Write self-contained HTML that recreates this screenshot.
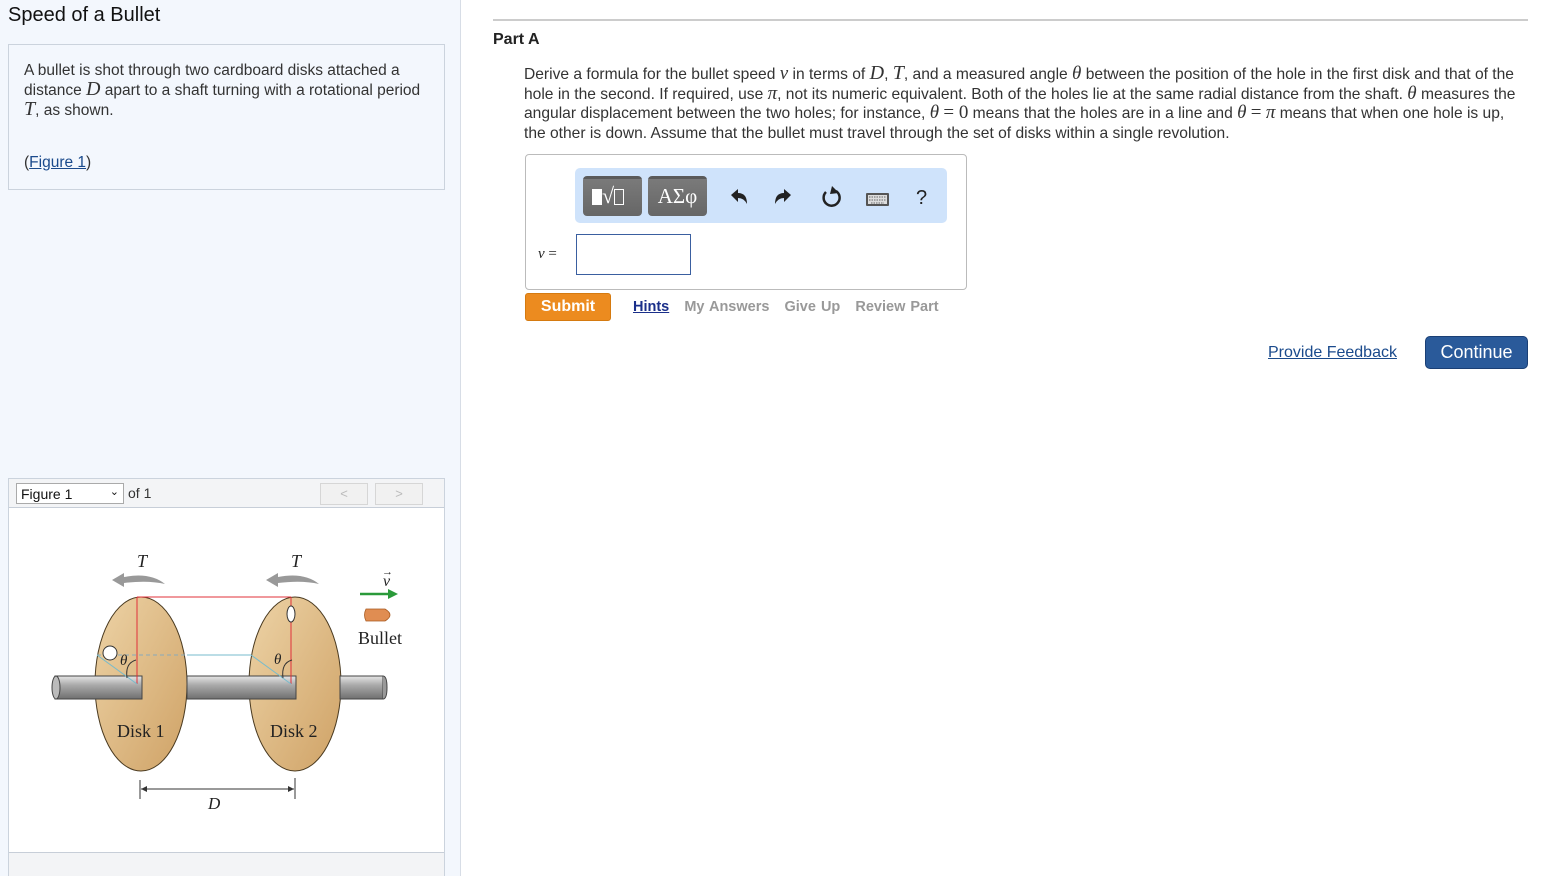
<!DOCTYPE html>
<html><head><meta charset="utf-8"><style>
*{margin:0;padding:0;box-sizing:border-box}
body{width:1544px;height:876px;overflow:hidden;background:#fff;font-family:"Liberation Sans",Arial,sans-serif;color:#333;position:relative}
.a{position:absolute}
.m{font-family:"Liberation Serif",serif;font-style:italic;font-size:19px;line-height:0}
.n{font-family:"Liberation Serif",serif;font-size:19px;line-height:0}
a{color:#1a4a8c}
</style></head><body>
<div class="a" style="left:0;top:0;width:461px;height:876px;background:#f3f7fd;border-right:1px solid #d7dde6"></div>
<div class="a" style="left:8px;top:4px;font-size:20px;color:#111">Speed of a Bullet</div>
<div class="a" style="left:8px;top:44px;width:437px;height:146px;border:1px solid #cbd3dd;background:#f3f7fd"></div>
<div class="a" style="left:24px;top:61px;width:405px;font-size:15.5px;line-height:20px;color:#333">A bullet is shot through two cardboard disks attached a distance <span class="m" style="font-size:20px">D</span> apart to a shaft turning with a rotational period <span class="m" style="font-size:20px">T</span>, as shown.</div>
<div class="a" style="left:24px;top:154px;font-size:15.5px">(<a href="#" style="color:#1a4a8c">Figure 1</a>)</div>

<div class="a" style="left:8px;top:478px;width:437px;height:398px;border:1px solid #cbd3dd;background:#fff"></div>
<div class="a" style="left:9px;top:479px;width:435px;height:29px;background:#f3f4f6;border-bottom:1px solid #c7ced8"></div>
<div class="a" style="left:16px;top:483px;width:108px;height:21px;border:1px solid #aaa;background:#fff;font-size:14px;padding:2px 4px;color:#111">Figure 1<span style="position:absolute;right:4px;top:1px;font-size:11px">&#8964;</span></div>
<div class="a" style="left:128px;top:485px;font-size:14px;color:#333">of 1</div>
<div class="a" style="left:320px;top:483px;width:48px;height:22px;border:1px solid #d6d6d6;background:#f1f1f1;color:#bbb;text-align:center;font-size:13px;line-height:20px">&lt;</div>
<div class="a" style="left:375px;top:483px;width:48px;height:22px;border:1px solid #d6d6d6;background:#f1f1f1;color:#bbb;text-align:center;font-size:13px;line-height:20px">&gt;</div>
<div class="a" style="left:9px;top:852px;width:435px;height:24px;background:#f3f4f6;border-top:1px solid #c7ced8"></div>

<svg class="a" style="left:0;top:0" width="461" height="876">
<defs>
<linearGradient id="d" x1="0" x2="1" y1="0" y2="1"><stop offset="0" stop-color="#edd3a6"/><stop offset="1" stop-color="#cfa266"/></linearGradient>
<linearGradient id="s" x1="0" x2="0" y1="0" y2="1"><stop offset="0" stop-color="#e6e6e6"/><stop offset=".4" stop-color="#a9a9a9"/><stop offset="1" stop-color="#707070"/></linearGradient>
</defs>
<ellipse cx="141" cy="684" rx="46" ry="87" fill="url(#d)" stroke="#4a3a20"/>
<rect x="55" y="676" width="87" height="23" fill="url(#s)" stroke="#444"/>
<ellipse cx="56" cy="687.5" rx="4" ry="11.5" fill="#bbb" stroke="#444"/>
<ellipse cx="295" cy="684" rx="46" ry="87" fill="url(#d)" stroke="#4a3a20"/>
<rect x="187" y="676" width="109" height="23" fill="url(#s)" stroke="#444"/>
<rect x="340" y="676" width="43" height="23" fill="url(#s)" stroke="#444"/>
<path d="M383 676 q4 0 4 11.5 q0 11.5 -4 11.5" fill="#999" stroke="#444"/>
<line x1="137" y1="597" x2="291" y2="597" stroke="#e0303a"/>
<line x1="137" y1="597" x2="137" y2="684" stroke="#e0303a"/>
<line x1="291" y1="597" x2="291" y2="684" stroke="#e0303a"/>
<line x1="97" y1="655" x2="185" y2="655" stroke="#8ab" stroke-dasharray="4 3"/>
<line x1="187" y1="655" x2="251" y2="655" stroke="#7bc"/>
<line x1="97" y1="655" x2="137" y2="684" stroke="#7bc"/>
<line x1="251" y1="655" x2="291" y2="684" stroke="#7bc"/>
<ellipse cx="110" cy="653" rx="7" ry="7" fill="#fff" stroke="#333"/>
<ellipse cx="291" cy="614" rx="4" ry="8" fill="#fff" stroke="#333"/>
<path d="M127 678 Q125 663 136 660" fill="none" stroke="#333"/>
<path d="M283 678 Q281 663 292 660" fill="none" stroke="#333"/>
<text x="120" y="665" font-family="Liberation Serif" font-style="italic" font-size="15" fill="#222">θ</text>
<text x="274" y="664" font-family="Liberation Serif" font-style="italic" font-size="15" fill="#222">θ</text>
<path d="M112 580 L124 573 L124 577 Q150 572 165 584 Q148 580 124 583 L124 587Z" fill="#999"/>
<path d="M266 580 L278 573 L278 577 Q304 572 319 584 Q302 580 278 583 L278 587Z" fill="#999"/>
<text x="137" y="567" font-family="Liberation Serif" font-style="italic" font-size="18" fill="#222">T</text>
<text x="291" y="567" font-family="Liberation Serif" font-style="italic" font-size="18" fill="#222">T</text>
<text x="383" y="586" font-family="Liberation Serif" font-style="italic" font-size="16" fill="#222">v</text>
<text x="382" y="575" font-size="11" fill="#222">→</text>
<line x1="360" y1="594" x2="390" y2="594" stroke="#2a9a3a" stroke-width="2.5"/>
<path d="M388 589 L398 594 L388 599Z" fill="#2a9a3a"/>
<path d="M366 609 L385 609 Q395 615 385 621 L366 621 Q363 615 366 609Z" fill="#e08d52" stroke="#a85a20" stroke-width=".8"/>
<text x="358" y="644" font-family="Liberation Serif" font-size="18" fill="#222">Bullet</text>
<text x="117" y="737" font-family="Liberation Serif" font-size="18" fill="#222">Disk 1</text>
<text x="270" y="737" font-family="Liberation Serif" font-size="18" fill="#222">Disk 2</text>
<line x1="140" y1="780" x2="140" y2="799" stroke="#333"/>
<line x1="295" y1="778" x2="295" y2="799" stroke="#333"/>
<line x1="141" y1="789" x2="294" y2="789" stroke="#333"/>
<path d="M141 789 l6 -3 v6z M294 789 l-6 -3 v6z" fill="#333"/>
<text x="208" y="809" font-family="Liberation Serif" font-style="italic" font-size="17" fill="#222">D</text>
</svg>

<div class="a" style="left:493px;top:19px;width:1035px;height:2px;background:#ccc"></div>
<div class="a" style="left:493px;top:31px;font-size:16px;font-weight:bold;color:#222">Part A</div>
<div class="a" style="left:524px;top:65px;width:1004px;font-size:15.6px;line-height:19.7px;color:#333">Derive a formula for the bullet speed <span class="m">v</span> in terms of <span class="m" style="font-size:20px">D</span>, <span class="m" style="font-size:20px">T</span>, and a measured angle <span class="m">θ</span> between the position of the hole in the first disk and that of the hole in the second. If required, use <span class="m">π</span>, not its numeric equivalent. Both of the holes lie at the same radial distance from the shaft. <span class="m">θ</span> measures the angular displacement between the two holes; for instance, <span class="m">θ</span> <span class="n">= 0</span> means that the holes are in a line and <span class="m">θ</span> <span class="n">=</span> <span class="m">π</span> means that when one hole is up, the other is down. Assume that the bullet must travel through the set of disks within a single revolution.</div>

<div class="a" style="left:525px;top:154px;width:442px;height:136px;border:1px solid #bbb;border-radius:4px"></div>
<div class="a" style="left:575px;top:168px;width:372px;height:55px;background:#cfe3fb;border-radius:5px"></div>
<div class="a" style="left:583px;top:176px;width:59px;height:40px;background:linear-gradient(#5a5a5a 0,#5a5a5a 3px,#7a7a7a 3px,#666);border-radius:4px;color:#fff;font-family:'Liberation Serif';font-size:22px;line-height:40px;padding-left:9px"><span style="display:inline-block;width:10px;height:16px;background:#fff;vertical-align:-2px"></span>√<span style="display:inline-block;width:10px;height:16px;border:1.5px solid #fff;vertical-align:-2px"></span></div>
<div class="a" style="left:648px;top:176px;width:59px;height:40px;background:linear-gradient(#5a5a5a 0,#5a5a5a 3px,#7a7a7a 3px,#666);border-radius:4px;color:#fff;font-family:'Liberation Serif';font-size:21px;line-height:40px;text-align:center">ΑΣφ</div>
<svg class="a" style="left:725px;top:185px" width="220" height="26">
<path d="M6 10 L13 4 V8 Q22 8 22 19 Q19 13 13 13 V17Z" fill="#222"/>
<path d="M66 10 L59 4 V8 Q50 8 50 19 Q53 13 59 13 V17Z" fill="#222"/>
<path d="M101 7 A8 8 0 1 0 111 6" fill="none" stroke="#222" stroke-width="2.5"/>
<path d="M107 1 L114 8 L105 9Z" fill="#222"/>
<rect x="141" y="8" width="23" height="13" fill="#555" rx="1"/>
<rect x="143" y="10" width="19" height="9" fill="#ddd"/>
<path d="M144 12h17M144 15h17M146 18h13" stroke="#666" stroke-width="1" stroke-dasharray="1.5 1"/>
<text x="191" y="19" font-size="20" fill="#222" font-family="Liberation Sans">?</text>
</svg>
<div class="a" style="left:538px;top:246px;font-family:'Liberation Serif';font-size:15px;color:#222"><i>v</i> =</div>
<div class="a" style="left:576px;top:234px;width:115px;height:41px;border:1px solid #3a5fa0"></div>

<div class="a" style="left:525px;top:293px;width:86px;height:28px;background:#ec8b1f;border:1px solid #d57a10;border-radius:3px;color:#fff;font-weight:bold;font-size:16px;text-align:center;line-height:26px">Submit</div>
<div class="a" style="left:633px;top:299px;font-size:14.5px;font-weight:bold;color:#999;word-spacing:1px"><span style="color:#1a2f8a;text-decoration:underline">Hints</span>&nbsp;&nbsp;&nbsp;My Answers&nbsp;&nbsp;&nbsp;Give Up&nbsp;&nbsp;&nbsp;Review Part</div>

<div class="a" style="left:1268px;top:344px;font-size:16px;color:#1a4a8c;text-decoration:underline">Provide Feedback</div>
<div class="a" style="left:1425px;top:336px;width:103px;height:33px;background:#2a5a9a;border:1px solid #1a3f75;border-radius:5px;color:#fff;font-size:18px;text-align:center;line-height:31px">Continue</div>
</body></html>
